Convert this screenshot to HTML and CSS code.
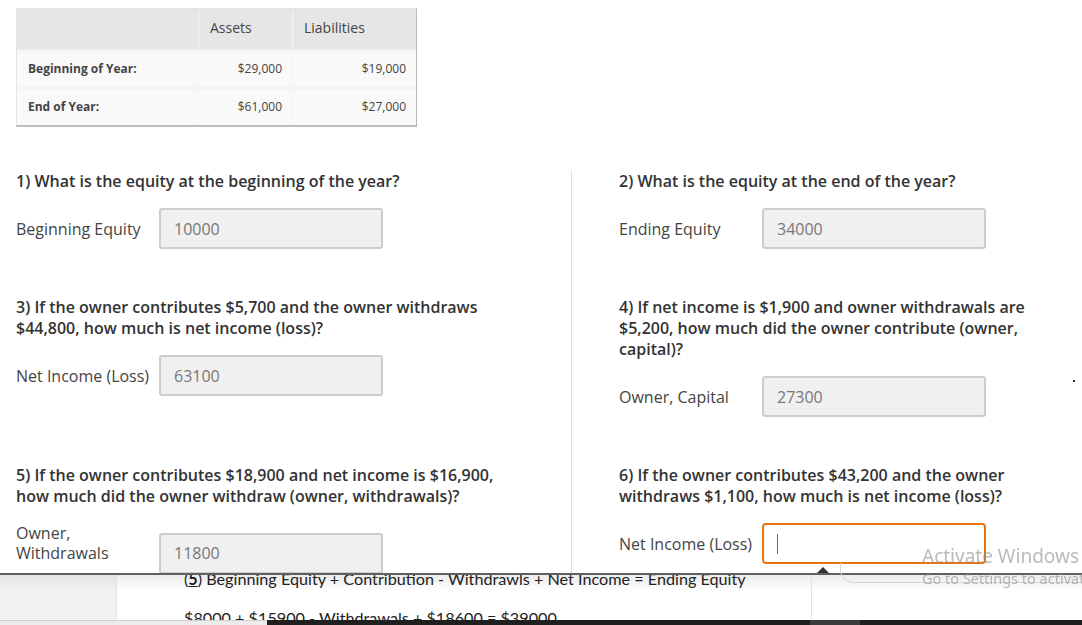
FILE: index.html
```html
<!DOCTYPE html>
<html lang="en">
<head>
  <meta charset="UTF-8">
  <meta name="viewport" content="width=device-width, initial-scale=1.0">
  <title>Equity Questions</title>
  <link rel="stylesheet" href="styles.css">
</head>
<body>
  <table class="data-table">
    <thead>
      <tr>
        <th class="col-label"></th>
        <th class="col-assets">Assets</th>
        <th class="col-liab">Liabilities</th>
      </tr>
    </thead>
    <tbody>
      <tr>
        <td class="row-name">Beginning of Year:</td>
        <td class="num">$29,000</td>
        <td class="num">$19,000</td>
      </tr>
      <tr>
        <td class="row-name">End of Year:</td>
        <td class="num">$61,000</td>
        <td class="num">$27,000</td>
      </tr>
    </tbody>
  </table>

  <div class="questions">
    <div class="cell cell-left">
      <p class="q-title">1) What is the equity at the beginning of the year?</p>
      <div class="field-row">
        <label class="field-label">Beginning Equity</label>
        <input class="field" type="text" value="10000" readonly>
      </div>
    </div>
    <div class="cell cell-right">
      <p class="q-title">2) What is the equity at the end of the year?</p>
      <div class="field-row">
        <label class="field-label">Ending Equity</label>
        <input class="field" type="text" value="34000" readonly>
      </div>
    </div>

    <div class="cell cell-left">
      <p class="q-title">3) If the owner contributes $5,700 and the owner withdraws $44,800, how much is net income (loss)?</p>
      <div class="field-row">
        <label class="field-label">Net Income (Loss)</label>
        <input class="field" type="text" value="63100" readonly>
      </div>
    </div>
    <div class="cell cell-right">
      <p class="q-title">4) If net income is $1,900 and owner withdrawals are $5,200, how much did the owner contribute (owner, capital)?</p>
      <div class="field-row">
        <label class="field-label">Owner, Capital</label>
        <input class="field" type="text" value="27300" readonly>
      </div>
    </div>

    <div class="cell cell-left">
      <p class="q-title">5) If the owner contributes $18,900 and net income is $16,900, how much did the owner withdraw (owner, withdrawals)?</p>
      <div class="field-row">
        <label class="field-label">Owner, Withdrawals</label>
        <input class="field" type="text" value="11800" readonly>
      </div>
    </div>
    <div class="cell cell-right">
      <p class="q-title">6) If the owner contributes $43,200 and the owner withdraws $1,100, how much is net income (loss)?</p>
      <div class="field-row field-row-center">
        <label class="field-label">Net Income (Loss)</label>
        <div class="field field-focus"><span class="caret"></span></div>
      </div>
    </div>
  </div>

  <span class="stray-dot"></span>

  <div class="watermark">
    <div class="wm-title">Activate Windows</div>
    <div class="wm-sub">Go to Settings to activate Windows.</div>
  </div>

  <!-- hint drawer at the bottom -->
  <div class="drawer">
    <span class="drawer-tab"></span>
    <span class="drawer-ghost"></span>
    <div class="drawer-side"></div>
    <div class="drawer-main">
      <p class="hint-line">(<b><u>5</u></b>) Beginning Equity + Contribution - Withdrawls + Net Income = Ending Equity</p>
      <p class="hint-line">$8000 + $15900 - Withdrawals + $18600 = $39000</p>
    </div>
    <div class="drawer-rest"></div>
  </div>

  <div class="taskbar">
    <div class="taskbar-left"></div>
    <div class="taskbar-dark">
      <span class="taskbar-seg"></span>
    </div>
  </div>
</body>
</html>
```

FILE: styles.css
```css
body {
  margin: 8px 0 0 16px;
  font-family: "Open Sans", "Noto Sans", sans-serif;
  color: #333;
  background: #fff;
  overflow: hidden;
}

/* top data table */
.data-table {
  border-collapse: separate;
  border-spacing: 0;
  width: 401px;
  border: 1px solid #e2e2e2;
  border-right-color: #b8b8b8;
  border-bottom: 2px solid #bdbdbd;
  font-size: 12px;
}
.data-table th, .data-table td {
  border-right: 1px solid #f4f4f4;
  border-bottom: 2px solid #f2f2f2;
  padding: 0 10px 0 11px;
}
.data-table th {
  background: #e6e6e6;
  height: 36px;
  padding-bottom: 4px;
  font-size: 14px;
  font-weight: normal;
  text-align: left;
  color: #444;
}
.data-table td {
  background: #f9f9f9;
  height: 34px;
  padding-bottom: 2px;
  color: #444;
}
.data-table tr:last-child td { border-bottom: none; }
.data-table th:last-child, .data-table td:last-child { border-right: none; }
.col-label { width: 160px; }
.col-assets { width: 72px; }
.row-name { font-weight: bold; color: #333; }
.num { text-align: right; }

/* questions grid */
.questions {
  display: grid;
  grid-template-columns: 556px 1fr;
  margin-top: 44px;
}
.cell { padding-bottom: 48px; }
.cell-left {
  padding-right: 50px;
  border-right: 1px solid #ddd;
}
.cell-right {
  padding-left: 47px;
  padding-right: 10px;
}
.q-title {
  margin: 0 0 16px;
  font-size: 16px;
  font-weight: 600;
  line-height: 21px;
  color: #333;
}
.field-row {
  display: flex;
  align-items: last baseline;
}
.field-row-center { align-items: center; }
.field-label {
  flex: 0 0 143px;
  width: 143px;
  padding-right: 8px;
  box-sizing: border-box;
  font-size: 16px;
  line-height: 20px;
  color: #444;
}
.field {
  box-sizing: border-box;
  width: 224px;
  height: 41px;
  padding: 0 13px;
  border: 2px solid #cdcdcd;
  border-radius: 3px;
  background: #f0f0f0;
  font-family: inherit;
  font-size: 16px;
  color: #777;
  outline: none;
}
.field-focus {
  display: flex;
  align-items: center;
  background: #fff;
  border-color: #e8730f;
  border-radius: 4px;
}
.caret {
  display: block;
  width: 1px;
  height: 20px;
  background: #9a5a20;
}

.stray-dot {
  position: absolute;
  left: 1073px;
  top: 380px;
  width: 2px;
  height: 2px;
  background: #333;
}

/* windows watermark */
.watermark {
  position: fixed;
  left: 922px;
  top: 543px;
  z-index: 5;
  color: rgba(140, 140, 140, 0.6);
  white-space: nowrap;
  font-family: "Noto Sans", "Open Sans", sans-serif;
}
.wm-title { font-size: 19px; line-height: 26px; }
.wm-sub { font-size: 14.5px; line-height: 20px; margin-top: -1px; }

/* bottom drawer */
.drawer {
  position: fixed;
  left: 0;
  right: 0;
  top: 573px;
  height: 52px;
  display: flex;
  border-top: 2px solid #5f5f5f;
  background: #fff;
  font-family: "Lato", "Open Sans", sans-serif;
}
.drawer-tab {
  position: absolute;
  left: 817px;
  top: -8px;
  width: 0;
  height: 0;
  border-left: 6px solid transparent;
  border-right: 6px solid transparent;
  border-bottom: 6px solid #333;
}
.drawer-ghost {
  position: absolute;
  left: 840px;
  top: -12px;
  width: 260px;
  height: 19px;
  border: 1px solid #d6d6d6;
  border-top: none;
  border-right: none;
  border-radius: 0 0 0 14px;
}
.drawer-side {
  width: 116px;
  background: linear-gradient(#e2e2e2, #f2f2f2 14px);
}
.drawer-main {
  width: 627px;
  padding-left: 67px;
  border-left: 1px solid #e4e4e4;
  border-right: 1px solid #e4e4e4;
  background: linear-gradient(#ececec, #fff 16px);
  overflow: hidden;
}
.drawer-rest {
  flex: 1;
  background: linear-gradient(#ececec, #fff 16px);
}
.hint-line {
  margin: -6px 0 25px;
  font-size: 16.2px;
  line-height: 20px;
  color: #222;
  white-space: nowrap;
}

.taskbar {
  position: fixed;
  left: 0;
  right: 0;
  bottom: 0;
  height: 5px;
  display: flex;
  z-index: 6;
}
.taskbar-left {
  width: 267px;
  background: #ececec;
  border-top: 1px solid #cfcfcf;
}
.taskbar-dark {
  flex: 1;
  background: #1f1f1f;
  padding-left: 543px;
}
.taskbar-seg {
  display: block;
  width: 50px;
  height: 100%;
  background: #3c3c3c;
}
```
